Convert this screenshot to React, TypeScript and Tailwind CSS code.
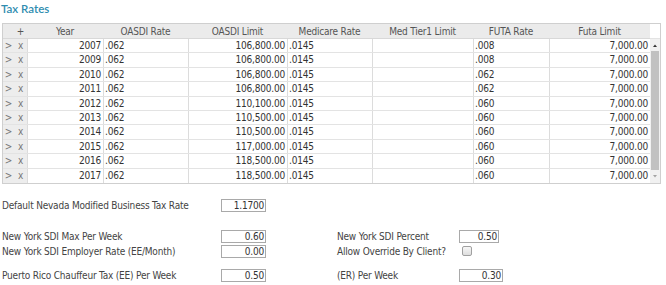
import React from "react"

const rows = [
  { year: "2007", oasdiRate: ".062", oasdiLimit: "106,800.00", medicare: ".0145", tier1: "", futaRate: ".008", futaLimit: "7,000.00" },
  { year: "2009", oasdiRate: ".062", oasdiLimit: "106,800.00", medicare: ".0145", tier1: "", futaRate: ".008", futaLimit: "7,000.00" },
  { year: "2010", oasdiRate: ".062", oasdiLimit: "106,800.00", medicare: ".0145", tier1: "", futaRate: ".062", futaLimit: "7,000.00" },
  { year: "2011", oasdiRate: ".062", oasdiLimit: "106,800.00", medicare: ".0145", tier1: "", futaRate: ".062", futaLimit: "7,000.00" },
  { year: "2012", oasdiRate: ".062", oasdiLimit: "110,100.00", medicare: ".0145", tier1: "", futaRate: ".060", futaLimit: "7,000.00" },
  { year: "2013", oasdiRate: ".062", oasdiLimit: "110,500.00", medicare: ".0145", tier1: "", futaRate: ".060", futaLimit: "7,000.00" },
  { year: "2014", oasdiRate: ".062", oasdiLimit: "110,500.00", medicare: ".0145", tier1: "", futaRate: ".060", futaLimit: "7,000.00" },
  { year: "2015", oasdiRate: ".062", oasdiLimit: "117,000.00", medicare: ".0145", tier1: "", futaRate: ".060", futaLimit: "7,000.00" },
  { year: "2016", oasdiRate: ".062", oasdiLimit: "118,500.00", medicare: ".0145", tier1: "", futaRate: ".060", futaLimit: "7,000.00" },
  { year: "2017", oasdiRate: ".062", oasdiLimit: "118,500.00", medicare: ".0145", tier1: "", futaRate: ".060", futaLimit: "7,000.00" },
]

const cols = "grid grid-cols-[11px_13px_76px_85px_99px_85px_101px_76px_101px]"

function NumBox({ value, w = "w-[45px]" }: { value: string; w?: string }) {
  return (
    <div className={`${w} h-[13px] border border-[#a9a9a9] bg-white text-right pr-[1px] leading-[11px] text-[#333]`}>
      {value}
    </div>
  )
}

function FormRow({ children, className = "" }: { children: React.ReactNode; className?: string }) {
  return <div className={`flex items-center h-[13px] ${className}`}>{children}</div>
}

export default function App() {
  return (
    <div className="w-[666px] h-[285px] bg-white text-[10px] tracking-[-0.2px] text-[#444] font-['DejaVu_Sans_Condensed','DejaVu_Sans',sans-serif] font-stretch-condensed overflow-hidden">
      <h2 className="pl-[1px] pt-[2px] h-[23px] text-[11.5px] font-semibold tracking-normal text-[#2f8db0] font-['Lato',sans-serif] font-stretch-normal leading-[13px]">
        Tax Rates
      </h2>

      {/* Grid */}
      <div className="ml-[2px] w-[659px] border border-[#cfcfcf] flex">
        <div className="w-[647px]">
          <div className={`${cols} h-[15px] bg-[#ebebeb] border-b border-[#d8d8d8] text-[#555] items-center leading-[15px]`}>
            <div />
            <div className="text-center">+</div>
            <div className="text-center">Year</div>
            <div className="text-center">OASDI Rate</div>
            <div className="text-center">OASDI Limit</div>
            <div className="text-center">Medicare Rate</div>
            <div className="text-center">Med Tier1 Limit</div>
            <div className="text-center">FUTA Rate</div>
            <div className="text-center">Futa Limit</div>
          </div>
          {rows.map((r) => (
            <div key={r.year} className={`${cols} h-[14.4px] border-b border-[#e3e3e3] last:border-b-0 leading-[13px] text-[#333]`}>
              <div className="bg-[#ededed] text-[#777] text-center">&gt;</div>
              <div className="bg-[#ededed] text-[#777] text-center">x</div>
              <div className="border-l border-[#dcdcdc] text-right pr-[2px]">{r.year}</div>
              <div className="border-l border-[#dcdcdc] pl-[1px]">{r.oasdiRate}</div>
              <div className="border-l border-[#dcdcdc] text-right pr-[2px]">{r.oasdiLimit}</div>
              <div className="border-l border-[#dcdcdc] pl-[1px]">{r.medicare}</div>
              <div className="border-l border-[#dcdcdc] pl-[1px]">{r.tier1}</div>
              <div className="border-l border-[#dcdcdc] pl-[1px]">{r.futaRate}</div>
              <div className="border-l border-[#dcdcdc] text-right pr-[2px]">{r.futaLimit}</div>
            </div>
          ))}
        </div>
        {/* Scrollbar */}
        <div className="w-[10px] flex flex-col">
          <div className="h-[15px] bg-white border-b border-[#e3e3e3]" />
          <div className="flex-1 bg-[#f1f1f1] flex flex-col items-center">
            <svg width="10" height="12" viewBox="0 0 10 12" className="shrink-0">
              <path d="M3 8 L5 5.5 L7 8 Z" fill="#333" />
            </svg>
            <div className="w-[8px] flex-1 bg-[#c1c1c1]" />
            <svg width="10" height="13" viewBox="0 0 10 13" className="shrink-0">
              <path d="M3 5 L5 7.5 L7 5 Z" fill="#a3a3a3" />
            </svg>
          </div>
        </div>
      </div>

      {/* Form */}
      <div className="pl-[2px] mt-[15px] whitespace-nowrap">
        <FormRow>
          <span className="w-[219px]">Default Nevada Modified Business Tax Rate</span>
          <NumBox value="1.1700" />
        </FormRow>

        <FormRow className="mt-[18px]">
          <span className="w-[219px]">New York SDI Max Per Week</span>
          <NumBox value="0.60" />
          <span className="ml-[71px] w-[122px]">New York SDI Percent</span>
          <NumBox value="0.50" w="w-[40px]" />
        </FormRow>

        <FormRow className="mt-[2px]">
          <span className="w-[219px]">New York SDI Employer Rate (EE/Month)</span>
          <NumBox value="0.00" />
          <span className="ml-[71px] w-[125px]">Allow Override By Client?</span>
          <div className="w-[10px] h-[10px] rounded-[2px] border border-[#a0a0a0] bg-gradient-to-b from-[#f7f7f7] to-[#dedede]" />
        </FormRow>

        <FormRow className="mt-[11px]">
          <span className="w-[219px]">Puerto Rico Chauffeur Tax (EE) Per Week</span>
          <NumBox value="0.50" />
          <span className="ml-[71px] w-[122px]">(ER) Per Week</span>
          <NumBox value="0.30" w="w-[44px]" />
        </FormRow>
      </div>
    </div>
  )
}
